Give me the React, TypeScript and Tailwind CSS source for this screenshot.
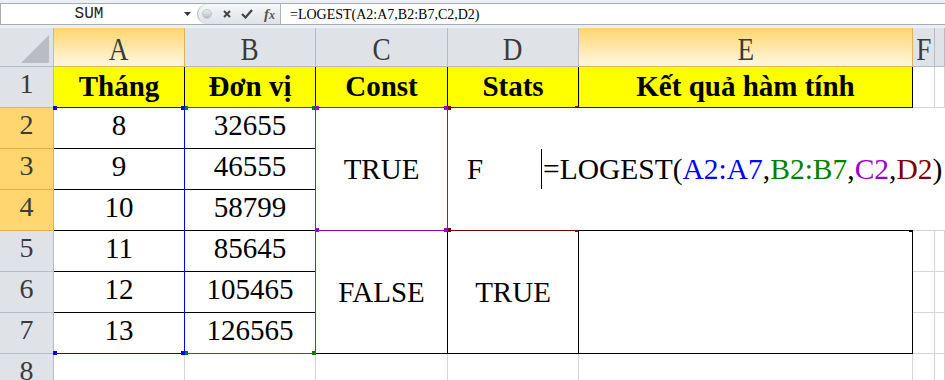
import React from "react";

const SERIF = "[font-family:'Liberation_Serif','Times_New_Roman',serif]";
const GRID = "border-[#d4d4d4]";

const ColHead = ({ label, sel }: { label: string; sel?: boolean }) => (
  <div
    className={`flex items-center justify-center overflow-hidden border-r border-b pt-[4px] ${
      sel
        ? "bg-linear-to-b from-[#fed56a] to-[#fff8df] border-[#e1b24e]"
        : "bg-[#dfe3e8] border-[#b6bcc3]"
    }`}
  >
    <span className="inline-block scale-x-[0.85] text-[32px] leading-none text-[#3a3a3a]">
      {label}
    </span>
  </div>
);

const RowHead = ({ n, sel }: { n: number; sel?: boolean }) => (
  <div
    className={`flex items-end justify-center pb-[2px] border-r border-b text-[28px] text-[#3a3a3a] ${
      sel ? "bg-[#ffd76e] border-[#e2ae48]" : "bg-[#dfe3e8] border-[#b6bcc3]"
    }`}
  >
    {n}
  </div>
);

// header cell of row 1 (yellow, bold)
const Th = ({ children, className = "" }: { children: React.ReactNode; className?: string }) => (
  <div
    className={`flex items-center justify-center border-r border-b border-black bg-[#ffff00] font-bold whitespace-nowrap ${className}`}
  >
    {children}
  </div>
);

const Td = ({ children }: { children?: React.ReactNode }) => (
  <div className="flex items-end justify-center pb-[1px] border-r border-b border-black">
    {children}
  </div>
);

const Empty = ({ bottom = true }: { bottom?: boolean }) => (
  <div className={`border-r ${bottom ? "border-b" : ""} ${GRID}`} />
);

// coloured range box drawn over the sheet while a formula is edited
const Range = ({
  l,
  t,
  r,
  b,
  color,
  noLeft,
}: {
  l: number;
  t: number;
  r: number;
  b: number;
  color: string;
  noLeft?: boolean;
}) => {
  const top = t - 28;
  const bot = b - 28;
  const sq = "absolute w-[4px] h-[4px]";
  return (
    <>
      <div
        className={`absolute pointer-events-none border ${noLeft ? "border-l-0" : ""}`}
        style={{ left: l, top, width: r - l + 1, height: bot - top + 1, borderColor: color }}
      />
      <div className={sq} style={{ left: l, top: top - 1, background: color }} />
      <div className={sq} style={{ left: r - 3, top: top - 1, background: color }} />
      <div className={sq} style={{ left: l, top: bot - 2, background: color }} />
      <div className={sq} style={{ left: r - 3, top: bot - 2, background: color }} />
    </>
  );
};

const data = [
  { n: 2, a: "8", b: "32655" },
  { n: 3, a: "9", b: "46555" },
  { n: 4, a: "10", b: "58799" },
  { n: 5, a: "11", b: "85645" },
  { n: 6, a: "12", b: "105465" },
  { n: 7, a: "13", b: "126565" },
];

export default function App() {
  return (
    <div className={`w-[945px] h-[380px] overflow-hidden bg-white ${SERIF}`}>
      {/* Formula bar */}
      <div className="h-[28px] pt-[3px] bg-[#eceff3]">
        <div className="h-[22px] flex border-y border-l border-[#a7adb5] bg-white">
          <div className="w-[196px] flex items-center">
            <span className="w-[176px] text-center [font-family:'Liberation_Mono',monospace] text-[16px] text-[#222]">
              SUM
            </span>
            <svg width="7" height="4" viewBox="0 0 7 4" className="ml-[7px]">
              <path d="M0 0 H7 L3.5 4 Z" fill="#333" />
            </svg>
          </div>
          <div className="w-[84px] flex items-center rounded-l-[11px] border-l border-r border-[#b0b5bc] bg-linear-to-b from-[#f6f7f9] to-[#dfe2e7]">
            <div className="ml-[4px] w-[10px] h-[10px] rounded-full border border-[#c3c7cd] bg-linear-to-b from-[#eceef1] to-[#b8bdc5]" />
            <svg width="8" height="8" viewBox="0 0 8 8" className="ml-[11px]">
              <path d="M1 1 L7 7 M7 1 L1 7" stroke="#444" strokeWidth="2" />
            </svg>
            <svg width="12" height="10" viewBox="0 0 12 10" className="ml-[10px]">
              <path d="M1 5 L4.5 8.5 L11 1" stroke="#444" strokeWidth="2.2" fill="none" />
            </svg>
            <span className="ml-[11px] italic font-bold text-[15px] leading-none text-[#555]">
              f<span className="text-[12px]">x</span>
            </span>
          </div>
          <div className="flex-1 flex items-center pl-[9px] text-[14px] text-black whitespace-nowrap">
            =LOGEST(A2:A7,B2:B7,C2,D2)
          </div>
        </div>
      </div>

      {/* Sheet */}
      <div className="relative grid grid-cols-[54px_131px_131px_132px_131px_334px_22px_1fr] grid-rows-[39px_41px_41px_41px_41px_41px_41px_41px_41px] text-[29px] text-black">
        {/* header row */}
        <div className="relative border-r border-b border-[#b6bcc3] bg-[#dfe3e8]">
          <svg width="54" height="39" className="absolute inset-0">
            <polygon points="49,7 49,35 21,35" fill="#b9bdc3" />
          </svg>
        </div>
        <ColHead label="A" sel />
        <ColHead label="B" />
        <ColHead label="C" />
        <ColHead label="D" />
        <ColHead label="E" sel />
        <ColHead label="F" />
        <ColHead label="" />

        {/* row 1 */}
        <RowHead n={1} />
        <Th>Tháng</Th>
        <Th>Đơn vị</Th>
        <Th>Const</Th>
        <Th>Stats</Th>
        <Th className="border-b-[#0000ff]">Kết quả hàm tính</Th>
        <Empty />
        <Empty />

        {/* rows 2 - 7 */}
        {data.map((d) => (
          <React.Fragment key={d.n}>
            <RowHead n={d.n} sel={d.n <= 4} />
            <Td>{d.a}</Td>
            <Td>{d.b}</Td>
            {d.n === 2 && (
              <>
                <div className="row-span-3 flex items-center justify-center pt-[1px] border-r border-b border-black">
                  TRUE
                </div>
                <div className="row-span-3 flex items-center pl-[19px] pt-[1px] border-b border-black">
                  F
                </div>
                <div className="row-span-3 border-b border-black" />
              </>
            )}
            {d.n === 5 && (
              <>
                <div className="row-span-3 flex items-center justify-center pt-[1px] border-r border-b border-black">
                  FALSE
                </div>
                <div className="row-span-3 flex items-center justify-center pt-[1px] border-r border-b border-black">
                  TRUE
                </div>
                <div className="row-span-3 border-r border-b border-black" />
              </>
            )}
            <Empty />
            <Empty />
          </React.Fragment>
        ))}

        {/* row 8 */}
        <RowHead n={8} />
        {Array.from({ length: 7 }).map((_, i) => (
          <Empty key={i} bottom={false} />
        ))}

        {/* formula range highlights */}
        <Range l={447} t={107} r={578} b={230} color="#800000" />
        <Range l={315} t={107} r={447} b={230} color="#9900cc" />
        <Range l={184} t={107} r={315} b={353} color="#008000" />
        <Range l={53} t={107} r={184} b={353} color="#0000ff" noLeft />
        <div className="absolute left-[909px] top-[201px] w-[4px] h-[3px] bg-black" />

        {/* in-cell editor */}
        <div className="absolute left-[541px] top-[80px] w-[404px] h-[122px] overflow-hidden bg-white flex items-center whitespace-nowrap text-[29.5px]">
          <span className="w-px h-[40px] bg-black shrink-0" />
          <span className="ml-[1px]">
            =LOGEST(<span className="text-[#0000ff]">A2:A7</span>,
            <span className="text-[#008000]">B2:B7</span>,
            <span className="text-[#9900cc]">C2</span>,
            <span className="text-[#800000]">D2</span>)
          </span>
        </div>
      </div>
    </div>
  );
}
